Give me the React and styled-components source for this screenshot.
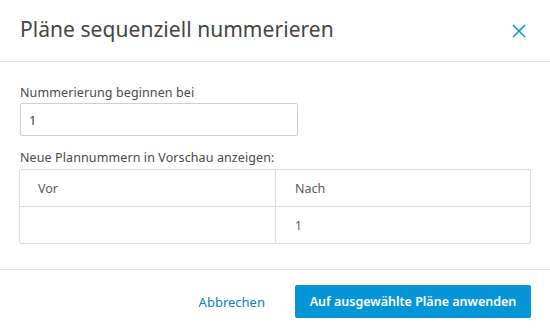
import React from 'react';
import styled, { createGlobalStyle } from 'styled-components';

const GlobalStyle = createGlobalStyle`
  html, body {
    margin: 0;
    padding: 0;
    background: #ffffff;
  }
  body {
    font-family: "Noto Sans", "Open Sans", sans-serif;
    color: #3c3c3c;
  }
`;

function CloseIcon() {
  return (
    <svg width="14" height="14" viewBox="0 0 14 14">
      <path d="M1 1 L13 13 M13 1 L1 13" stroke="#0696d7" strokeWidth="1.6" fill="none" />
    </svg>
  );
}

export default function App() {
  return (
    <>
      <GlobalStyle />
      <Dialog>
        <Header>
          <Title>Pläne sequenziell nummerieren</Title>
          <CloseButton aria-label="Schließen">
            <CloseIcon />
          </CloseButton>
        </Header>

        <Body>
          <Label>Nummerierung beginnen bei</Label>
          <Input defaultValue="1" />

          <Label $gap>Neue Plannummern in Vorschau anzeigen:</Label>
          <Table>
            <Row $head>
              <Cell $first>Vor</Cell>
              <Cell>Nach</Cell>
            </Row>
            <Row>
              <Cell $first></Cell>
              <Cell>1</Cell>
            </Row>
          </Table>
        </Body>

        <Footer>
          <LinkButton>Abbrechen</LinkButton>
          <PrimaryButton>Auf ausgewählte Pläne anwenden</PrimaryButton>
        </Footer>
      </Dialog>
    </>
  );
}

const Dialog = styled.div`
  width: 550px;
  height: 330px;
  background: #ffffff;
  display: flex;
  flex-direction: column;
`;

const Header = styled.div`
  height: 62px;
  box-sizing: border-box;
  padding: 0 20px 0 20px;
  display: flex;
  align-items: center;
  justify-content: space-between;
  border-bottom: 1px solid #e2e2e2;
`;

const Title = styled.h1`
  margin: 0 0 3px 0;
  font-size: 21px;
  font-weight: 400;
  color: #454545;
  letter-spacing: 0.05px;
`;

const CloseButton = styled.button`
  border: none;
  background: none;
  padding: 0;
  margin-right: 4px;
  width: 14px;
  height: 14px;
  display: flex;
  cursor: pointer;
`;

const Body = styled.div`
  padding: 23px 19px 25px 19px;
  display: flex;
  flex-direction: column;
`;

const Label = styled.label`
  font-size: 12.5px;
  line-height: 16px;
  color: #4a4a4a;
  padding-left: 1px;
  margin-top: ${p => (p.$gap ? '14px' : '0')};
  margin-bottom: 2px;
  letter-spacing: 0.1px;
`;

const Input = styled.input`
  width: 278px;
  height: 33px;
  box-sizing: border-box;
  margin-left: 1px;
  border: 1px solid #cfcfcf;
  border-radius: 2px;
  padding: 0 8px;
  font-family: "Noto Sans", "Open Sans", sans-serif;
  font-size: 13px;
  color: #3c3c3c;
  outline: none;
`;

const Table = styled.div`
  margin-top: 1px;
  border: 1px solid #dcdcdc;
  border-radius: 2px;
  display: flex;
  flex-direction: column;
`;

const Row = styled.div`
  display: grid;
  grid-template-columns: 256px 1fr;
  height: 36px;
  border-top: ${p => (p.$head ? 'none' : '1px solid #dcdcdc')};
  font-size: ${p => (p.$head ? '12.5px' : '12px')};
`;

const Cell = styled.div`
  display: flex;
  align-items: center;
  padding-left: ${p => (p.$first ? '18px' : '19px')};
  border-right: ${p => (p.$first ? '1px solid #dcdcdc' : 'none')};
  color: #5a5a5a;
`;

const Footer = styled.div`
  border-top: 1px solid #e2e2e2;
  padding: 15px 19px 0 19px;
  display: flex;
  justify-content: flex-end;
  align-items: center;
  gap: 15px;
`;

const LinkButton = styled.button`
  border: none;
  background: none;
  height: 33px;
  padding: 0 15px;
  font-family: "Noto Sans", "Open Sans", sans-serif;
  font-size: 13px;
  color: #0a7fc4;
  cursor: pointer;
`;

const PrimaryButton = styled.button`
  height: 33px;
  width: 236px;
  border: none;
  border-radius: 2px;
  background: #0696d7;
  color: #ffffff;
  font-family: "Noto Sans", "Open Sans", sans-serif;
  font-size: 12.5px;
  font-weight: 600;
  cursor: pointer;
`;
